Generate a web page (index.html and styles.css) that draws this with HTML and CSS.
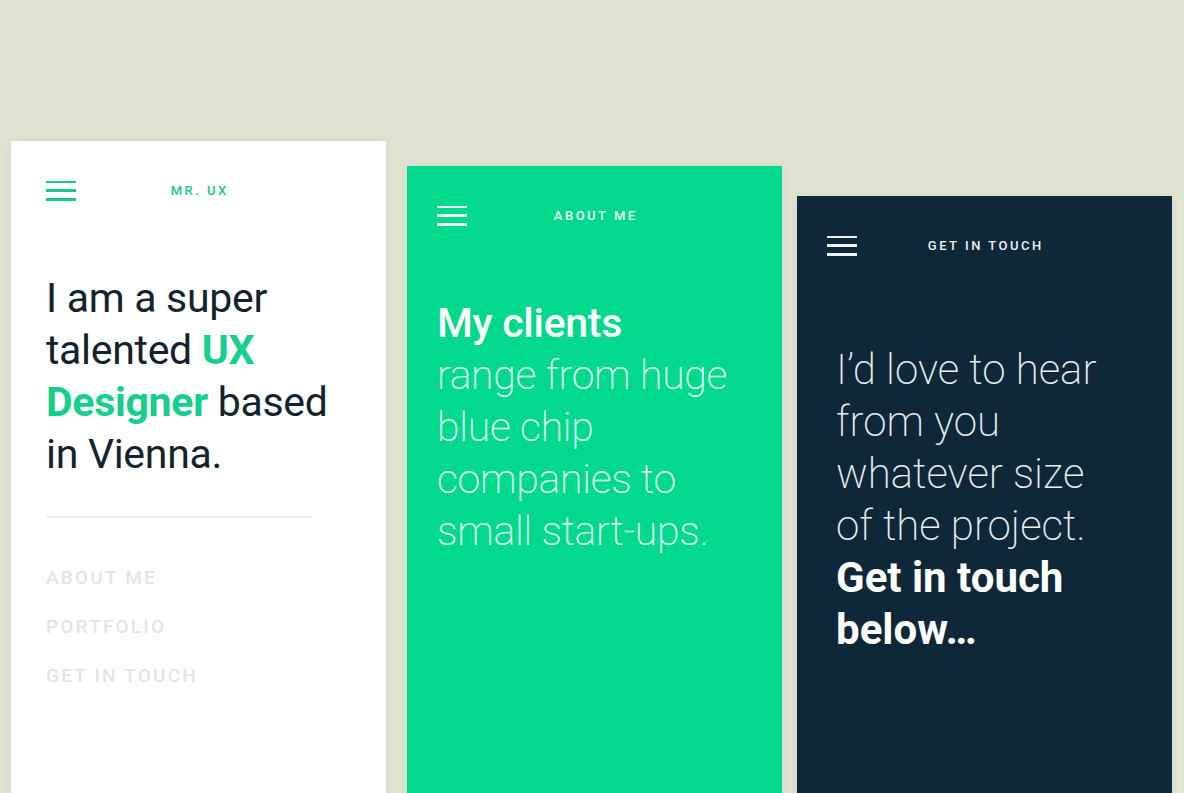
FILE: index.html
```html
<!DOCTYPE html>
<html lang="en">
<head>
<meta charset="utf-8">
<title>Mr. UX</title>
<link rel="stylesheet" href="styles.css">
</head>
<body>
<main class="stage">
  <section class="card card-white">
    <header class="bar">
      <span class="burger"><i></i><i></i><i></i></span>
      <span class="title">MR. UX</span>
    </header>
    <h1 class="lead">I am a super<br>talented <b class="accent">UX</b><br><b class="accent">Designer</b> based<br>in Vienna.</h1>
    <hr class="rule">
    <nav class="menu">
      <a>ABOUT ME</a>
      <a>PORTFOLIO</a>
      <a>GET IN TOUCH</a>
    </nav>
  </section>

  <section class="card card-green">
    <header class="bar">
      <span class="burger"><i></i><i></i><i></i></span>
      <span class="title">ABOUT ME</span>
    </header>
    <h1 class="lead thin"><b class="strong">My clients</b><br>range from huge<br>blue chip<br>companies to<br>small start-ups.</h1>
  </section>

  <section class="card card-navy">
    <header class="bar">
      <span class="burger"><i></i><i></i><i></i></span>
      <span class="title">GET IN TOUCH</span>
    </header>
    <h1 class="lead thin">I’d love to hear<br>from you<br>whatever size<br>of the project.<br><b class="heavy">Get in touch<br>below…</b></h1>
  </section>
</main>
</body>
</html>
```
FILE: styles.css
```css
* { box-sizing: border-box; }

html, body {
  margin: 0;
  height: 793px;
  overflow: hidden;
  background: #dfe3d1;
  font-family: Roboto, "Liberation Sans", sans-serif;
}

.stage {
  display: flex;
  align-items: flex-start;
  height: 793px;
  overflow: hidden;
  padding-left: 11px;
}

.card {
  width: 375px;
  height: 720px;
  flex: none;
  padding: 0 35px;
  box-shadow: 0 0 10px rgba(0, 0, 0, 0.05);
}

.card-white { background: #ffffff; margin-top: 141px; }
.card-green { background: #02d98d; margin-top: 166px; margin-left: 21px; padding: 0 30px; }
.card-navy  { background: #0f2839; margin-top: 196px; margin-left: 15px; padding: 0 30px; }

.bar {
  display: grid;
  grid-template-columns: 1fr auto 1fr;
  align-items: center;
  height: 21px;
  margin-top: 39px;
}

.burger {
  display: flex;
  flex-direction: column;
  justify-content: space-between;
  width: 30px;
  height: 20px;
}
.burger i {
  display: block;
  height: 2.5px;
  background: currentColor;
}

.title {
  font-size: 13px;
  font-weight: 500;
  letter-spacing: 2.5px;
  padding-left: 2.5px;
  line-height: 1;
  white-space: nowrap;
}

.card-white .burger, .card-white .title { color: #16c98a; }
.card-green .burger, .card-green .title { color: #eafff6; }
.card-navy .burger, .card-navy .title { color: #eef3f6; }

.lead {
  margin: 0;
  font-size: 41px;
  line-height: 52px;
  font-weight: 400;
  letter-spacing: -0.3px;
  white-space: nowrap;
}

.card-white .lead { color: #13222d; margin-top: 71px; }
.card-green .lead { color: #e3fff2; margin-top: 71px; }
.card-navy .lead {
  color: #e9eff3;
  margin-top: 88px;
  margin-left: 9px;
  font-size: 42px;
  letter-spacing: 0;
}

.thin { font-weight: 200; }

.accent { color: #17cf8c; font-weight: 700; }
.strong { color: #ffffff; font-weight: 500; }
.heavy { color: #ffffff; font-weight: 700; }

.rule {
  width: 267px;
  margin: 36px 0 0;
  border: 0;
  border-top: 2px solid #eeeeee;
}

.menu {
  display: flex;
  flex-direction: column;
  gap: 26px;
  margin-top: 48px;
}
.menu a {
  font-size: 19px;
  line-height: 23px;
  font-weight: 500;
  letter-spacing: 2.2px;
  color: #e3e4e4;
}
```
